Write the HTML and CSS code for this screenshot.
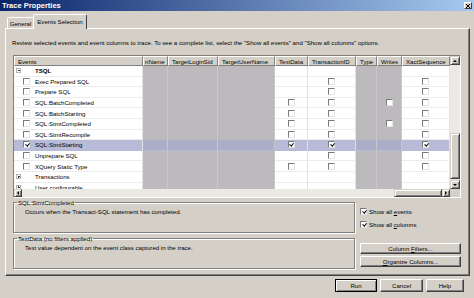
FILE: index.html
```html
<!DOCTYPE html>
<html lang="en">
<head>
  <meta charset="UTF-8" />
  <meta name="viewport" content="width=device-width, initial-scale=1.0" />
  <title>Trace Properties</title>
  <link rel="stylesheet" href="styles.css">
</head>
<body>
  <div class="titlebar">
    <span>Trace Properties</span>
    <span class="close"><svg width="4" height="4" viewBox="0 0 4 4"><path d="M0 0L4 4M4 0L0 4" stroke="#000" stroke-width="1"/></svg></span>
  </div>

  <div class="tabs">
    <div class="tab">General</div>
    <div class="tab active">Events Selection</div>
  </div>

  <div class="panel">
    <p class="intro">Review selected events and event columns to trace. To see a complete list, select the "Show all events" and "Show all columns" options.</p>

    <div class="grid">
      <div class="grid-main">
        <div class="grid-cols">
          <div class="row head">
            <div>Events</div><div class="cut">nName</div><div>TargetLoginSid</div><div>TargetUserName</div><div>TextData</div><div>TransactionID</div><div>Type</div><div>Writes</div><div>XactSequence</div>
          </div>
          <div class="row">
            <div class="ev"><i class="exp minus"></i><b class="name">TSQL</b></div>
            <div class="g"></div><div class="g"></div><div class="g"></div><div></div><div></div><div class="g"></div><div class="g"></div><div></div>
          </div>
          <div class="row">
            <div class="ev"><i class="cb"></i><span class="name">Exec Prepared SQL</span></div>
            <div class="g"></div><div class="g"></div><div class="g"></div><div></div><div><i class="cb"></i></div><div class="g"></div><div class="g"></div><div><i class="cb"></i></div>
          </div>
          <div class="row">
            <div class="ev"><i class="cb"></i><span class="name">Prepare SQL</span></div>
            <div class="g"></div><div class="g"></div><div class="g"></div><div></div><div><i class="cb"></i></div><div class="g"></div><div class="g"></div><div><i class="cb"></i></div>
          </div>
          <div class="row">
            <div class="ev"><i class="cb"></i><span class="name">SQL:BatchCompleted</span></div>
            <div class="g"></div><div class="g"></div><div class="g"></div><div><i class="cb"></i></div><div><i class="cb"></i></div><div class="g"></div><div class="g"><i class="cb"></i></div><div><i class="cb"></i></div>
          </div>
          <div class="row">
            <div class="ev"><i class="cb"></i><span class="name">SQL:BatchStarting</span></div>
            <div class="g"></div><div class="g"></div><div class="g"></div><div><i class="cb"></i></div><div><i class="cb"></i></div><div class="g"></div><div class="g"></div><div><i class="cb"></i></div>
          </div>
          <div class="row">
            <div class="ev"><i class="cb"></i><span class="name">SQL:StmtCompleted</span></div>
            <div class="g"></div><div class="g"></div><div class="g"></div><div><i class="cb"></i></div><div><i class="cb"></i></div><div class="g"></div><div class="g"><i class="cb"></i></div><div><i class="cb"></i></div>
          </div>
          <div class="row">
            <div class="ev"><i class="cb"></i><span class="name">SQL:StmtRecompile</span></div>
            <div class="g"></div><div class="g"></div><div class="g"></div><div><i class="cb"></i></div><div><i class="cb"></i></div><div class="g"></div><div class="g"></div><div><i class="cb"></i></div>
          </div>
          <div class="row sel">
            <div class="ev"><i class="cb on"></i><span class="name">SQL:StmtStarting</span></div>
            <div class="g"></div><div class="g"></div><div class="g"></div><div><i class="cb on"></i></div><div><i class="cb on"></i></div><div class="g"></div><div class="g"></div><div><i class="cb on"></i></div>
          </div>
          <div class="row">
            <div class="ev"><i class="cb"></i><span class="name">Unprepare SQL</span></div>
            <div class="g"></div><div class="g"></div><div class="g"></div><div></div><div><i class="cb"></i></div><div class="g"></div><div class="g"></div><div><i class="cb"></i></div>
          </div>
          <div class="row">
            <div class="ev"><i class="cb"></i><span class="name">XQuery Static Type</span></div>
            <div class="g"></div><div class="g"></div><div class="g"></div><div><i class="cb"></i></div><div><i class="cb"></i></div><div class="g"></div><div class="g"></div><div><i class="cb"></i></div>
          </div>
          <div class="row">
            <div class="ev"><i class="exp plus"></i><span class="name">Transactions</span></div>
            <div class="g"></div><div class="g"></div><div class="g"></div><div></div><div></div><div class="g"></div><div class="g"></div><div></div>
          </div>
          <div class="row">
            <div class="ev"><i class="exp plus"></i><span class="name">User configurable</span></div>
            <div class="g"></div><div class="g"></div><div class="g"></div><div></div><div></div><div class="g"></div><div class="g"></div><div></div>
          </div>
        </div>
        <div class="vscroll">
          <div class="sb-btn"><i class="arrow up"></i></div>
          <div class="track"><div class="thumb"></div></div>
          <div class="sb-btn"><i class="arrow down"></i></div>
        </div>
      </div>
      <div class="hbar">
        <div class="hscroll">
          <div class="sb-btn"><i class="arrow left"></i></div>
          <div class="track"><div class="thumb"></div></div>
          <div class="sb-btn"><i class="arrow right"></i></div>
        </div>
        <div class="corner"></div>
      </div>
    </div>

    <div class="lower">
      <div class="groups">
        <fieldset class="group">
          <legend>SQL:StmtCompleted</legend>
          <p>Occurs when the Transact-SQL statement has completed.</p>
        </fieldset>
        <fieldset class="group">
          <legend>TextData (no filters applied)</legend>
          <p>Text value dependent on the event class captured in the trace.</p>
        </fieldset>
      </div>
      <div class="side">
        <label class="check"><i class="cb on"></i><span>Show all <u>e</u>vents</span></label>
        <label class="check"><i class="cb on"></i><span>Show all <u>c</u>olumns</span></label>
        <div class="side-buttons">
          <button class="btn">Column <u>F</u>ilters...</button>
          <button class="btn"><u>O</u>rganize Columns...</button>
        </div>
      </div>
    </div>
  </div>

  <div class="footer">
    <button class="btn default run">Run</button>
    <button class="btn cancel">Cancel</button>
    <button class="btn help">Help</button>
  </div>
</body>
</html>
```

FILE: styles.css
```css
:root {
  --face: #d4d0c8;
  --shadow: #808080;
  --dark: #404040;
  --light: #ffffff;
  --disabled: #bdbabd;
  --select: #b7bbd7;
  --select-disabled: #abaec8;
}
* {
  box-sizing: border-box;
}
body {
  margin: 0;
  width: 474px;
  height: 298px;
  overflow: hidden;
  background: var(--face);
  font-family: "Liberation Sans", Arial, sans-serif;
  font-size: 6.1px;
  line-height: 7px;
  color: #000;
}
p {
  margin: 0;
}
i {
  display: block;
  flex: none;
}

/* title bar */
.titlebar {
  height: 11px;
  padding: 0 2px;
  display: flex;
  align-items: center;
  justify-content: space-between;
  background: linear-gradient(to right, #0a246a, #a6caf0);
  color: var(--light);
  font-weight: bold;
  font-size: 7.5px;
}
.close {
  width: 8px;
  height: 7px;
  display: flex;
  align-items: center;
  justify-content: center;
  background: var(--face);
  border: 1px solid;
  border-color: var(--light) var(--dark) var(--dark) var(--light);
}

/* tabs */
.tabs {
  height: 17px;
  padding-left: 7px;
  display: flex;
  align-items: flex-end;
}
.tab {
  width: 27px;
  height: 11px;
  padding-top: 2px;
  text-align: center;
  white-space: nowrap;
  border: 1px solid;
  border-bottom: 0;
  border-color: var(--light) var(--dark) transparent var(--light);
  border-radius: 2px 2px 0 0;
}
.tab.active {
  width: 54px;
  height: 15px;
  margin-left: -1px;
  margin-bottom: -1px;
  padding-top: 3px;
  background: var(--face);
  position: relative;
  z-index: 1;
}

/* tab page */
.panel {
  height: 248px;
  margin: 0 4px 0 5px;
  padding-left: 6px;
  border: 1px solid;
  border-color: var(--light) var(--dark) var(--dark) var(--light);
  box-shadow: inset -1px -1px 0 var(--shadow);
}
.intro {
  margin-top: 10px;
  white-space: nowrap;
}

/* events grid */
.grid {
  width: 448px;
  margin: 9px 0 0 1px;
  border: 1px solid;
  border-color: var(--shadow) var(--light) var(--light) var(--shadow);
}
.grid-main {
  height: 133px;
  display: flex;
}
.grid-cols {
  width: 436px;
  overflow: hidden;
  background: #fff;
}
.row {
  height: 10.6px;
  display: grid;
  grid-template-columns: 129px 25px 50px 57px 33px 48px 21px 25px 48px;
}
.row > div {
  display: flex;
  align-items: center;
  justify-content: center;
  border-right: 1px solid #e2e1e6;
  border-bottom: 1px solid #ececec;
}
.row > .g {
  background: var(--disabled);
  border-right-color: #cac7ca;
  border-bottom-color: var(--disabled);
}
.row.sel > div {
  background: var(--select);
  border-bottom-color: var(--select);
}
.row.sel > .g {
  background: var(--select-disabled);
}
.row.head {
  height: 10px;
}
.row.head > div {
  justify-content: flex-start;
  padding-left: 3px;
  white-space: nowrap;
  overflow: hidden;
  background: var(--face);
  border: 1px solid;
  border-color: var(--light) var(--shadow) var(--shadow) var(--light);
}
.row.head > .cut {
  padding-left: 1px;
}
.row > .ev {
  justify-content: flex-start;
  padding-left: 9px;
}
.name {
  margin-left: 5px;
  white-space: nowrap;
}
.exp + .name {
  margin-left: 14px;
}

/* small controls */
.cb {
  width: 7px;
  height: 7px;
  position: relative;
  background: #fff;
  border: 1px solid;
  border-color: #7a7a7a #e4e4e4 #e4e4e4 #7a7a7a;
}
.cb.on::after {
  content: "";
  position: absolute;
  left: 1.6px;
  top: -0.2px;
  width: 1.6px;
  height: 3.4px;
  border: solid #000;
  border-width: 0 1.2px 1.2px 0;
  transform: rotate(40deg);
}
.exp {
  width: 5px;
  height: 5px;
  margin-left: -7px;
  position: relative;
  border: 1px solid #b4b4b4;
  background: #fff;
}
.exp::before {
  content: "";
  position: absolute;
  left: 0.5px;
  top: 1px;
  width: 2px;
  height: 1px;
  background: #333;
}
.exp.plus::after {
  content: "";
  position: absolute;
  left: 1px;
  top: 0.5px;
  width: 1px;
  height: 2px;
  background: #333;
}

/* scrollbars */
.vscroll {
  width: 10px;
  display: flex;
  flex-direction: column;
  background: #ebe9e4;
}
.vscroll .sb-btn {
  height: 9px;
}
.vscroll .track {
  flex: 1;
  display: flex;
  flex-direction: column;
  justify-content: flex-end;
  padding-bottom: 1px;
}
.vscroll .thumb {
  height: 46px;
}
.hbar {
  height: 8px;
  display: flex;
}
.hscroll {
  width: 436px;
  display: flex;
  background: #ebe9e4;
}
.hscroll .sb-btn {
  width: 8px;
}
.hscroll .track {
  flex: 1;
  display: flex;
  justify-content: flex-end;
}
.hscroll .thumb {
  width: 48px;
}
.corner {
  flex: 1;
  background: var(--face);
}
.sb-btn,
.thumb {
  display: flex;
  align-items: center;
  justify-content: center;
  background: var(--face);
  border: 1px solid;
  border-color: var(--face) var(--dark) var(--dark) var(--face);
  box-shadow: inset 1px 1px 0 var(--light), inset -1px -1px 0 var(--shadow);
}
.arrow {
  width: 0;
  height: 0;
  border: 2px solid transparent;
}
.arrow.up {
  border-bottom-color: #000;
  border-top-width: 0;
}
.arrow.down {
  border-top-color: #000;
  border-bottom-width: 0;
}
.arrow.left {
  border-right-color: #000;
  border-left-width: 0;
}
.arrow.right {
  border-left-color: #000;
  border-right-width: 0;
}

/* descriptions and options */
.lower {
  margin: 1px 0 0 1px;
  display: flex;
  gap: 5px;
}
.groups {
  width: 342px;
  display: flex;
  flex-direction: column;
  gap: 2px;
}
.group {
  height: 34px;
  margin: 0;
  padding: 0;
  border: 1px solid var(--shadow);
  box-shadow: 1px 1px 0 var(--light), inset 1px 1px 0 var(--light);
}
.group legend {
  margin-left: 3px;
  padding: 0 1px;
}
.group p {
  margin: 2px 0 0 11px;
}
.side {
  width: 101px;
  padding-top: 9px;
  display: flex;
  flex-direction: column;
  gap: 6px;
}
.check {
  display: flex;
  align-items: center;
  gap: 2px;
}
.side-buttons {
  margin-top: 9px;
  display: flex;
  flex-direction: column;
  gap: 2px;
}
.btn {
  height: 11px;
  padding: 0;
  font: inherit;
  color: #000;
  background: var(--face);
  border: 1px solid;
  border-color: var(--light) var(--dark) var(--dark) var(--light);
  box-shadow: inset -1px -1px 0 var(--shadow);
}

/* dialog buttons */
.footer {
  margin-top: 3px;
  padding-right: 10px;
  display: flex;
  justify-content: flex-end;
  gap: 3px;
}
.footer .btn {
  height: 13px;
}
.btn.default {
  border-color: #000;
  box-shadow: inset 1px 1px 0 var(--light), inset -1px -1px 0 var(--shadow);
}
.run {
  width: 42px;
}
.cancel {
  width: 43px;
}
.help {
  width: 38px;
}
```
